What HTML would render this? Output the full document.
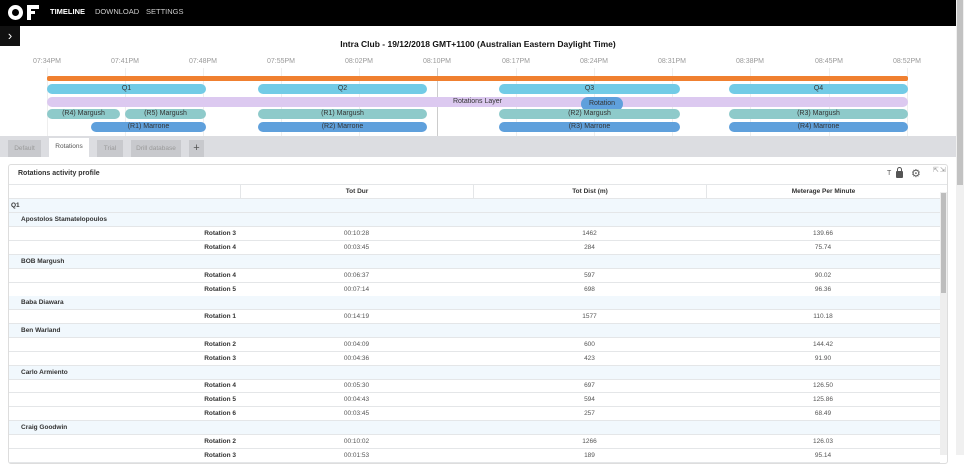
<!DOCTYPE html>
<html><head><style>
*{box-sizing:border-box;margin:0;padding:0}
body{width:964px;height:455px;overflow:hidden;background:#fff;font-family:"Liberation Sans",sans-serif;position:relative}
.a{position:absolute}
.bar{position:absolute;border-radius:6px;font-size:7px;color:#333;text-align:center;line-height:10px;height:10px}
.tick{position:absolute;top:58px;font-size:7px;color:#999;width:40px;margin-left:-20px;text-align:center}
.vl{position:absolute;top:68px;height:68px;width:1px;background:#eee}
.tab{position:absolute;top:140px;height:17px;font-size:6.5px;color:#999;background:#c8c9cd;line-height:17px;text-align:center}
.row{position:absolute;left:9px;width:931px;height:14px;border-bottom:1px solid #e4e6e8;font-size:6.5px;line-height:13px;color:#555}
.row.g{background:#f1f8fd;font-weight:bold;color:#333}
.row span{position:absolute;text-align:center}
.c1{left:0;width:231px;text-align:right!important;padding-right:4px;font-weight:bold;color:#333}
.c2{left:231px;width:233px}.c3{left:464px;width:233px}.c4{left:697px;width:234px}
</style></head><body>
<div class="a" style="left:0;top:0;width:956px;height:26px;background:#000"></div>
<div class="a" style="left:8px;top:5px;width:15px;height:15px;border:4px solid #fff;border-radius:50%"></div>
<div class="a" style="left:27px;top:5px;width:12px;height:4px;background:#fff"></div>
<div class="a" style="left:27px;top:5px;width:4px;height:15px;background:#fff"></div>
<div class="a" style="left:27px;top:11px;width:8px;height:3px;background:#fff"></div>
<div class="a" style="left:50px;top:7px;font-size:7.5px;color:#fff;font-weight:bold">TIMELINE</div>
<div class="a" style="left:95px;top:7px;font-size:7.5px;color:#ccc">DOWNLOAD</div>
<div class="a" style="left:146px;top:7px;font-size:7.5px;color:#ccc">SETTINGS</div>
<div class="a" style="left:0;top:26px;width:20px;height:20px;background:#111;color:#fff;font-size:13px;line-height:19px;text-align:center">&#8250;</div>
<div class="a" style="left:956px;top:0;width:8px;height:455px;background:#f0f0f0"></div>
<div class="a" style="left:957px;top:0;width:6px;height:185px;background:#c2c2c2"></div>
<div class="a" style="left:0;top:39px;width:956px;text-align:center;font-size:8.5px;font-weight:bold;color:#111">Intra Club - 19/12/2018 GMT+1100 (Australian Eastern Daylight Time)</div>
<div class="tick" style="left:47px">07:34PM</div><div class="tick" style="left:125px">07:41PM</div><div class="tick" style="left:203px">07:48PM</div><div class="tick" style="left:281px">07:55PM</div><div class="tick" style="left:359px">08:02PM</div><div class="tick" style="left:437px">08:10PM</div><div class="tick" style="left:516px">08:17PM</div><div class="tick" style="left:594px">08:24PM</div><div class="tick" style="left:672px">08:31PM</div><div class="tick" style="left:750px">08:38PM</div><div class="tick" style="left:829px">08:45PM</div><div class="tick" style="left:907px">08:52PM</div>
<div class="vl" style="left:47px"></div><div class="vl" style="left:125px"></div><div class="vl" style="left:203px"></div><div class="vl" style="left:281px"></div><div class="vl" style="left:359px"></div><div class="vl" style="left:437px;background:#ccc"></div><div class="vl" style="left:516px"></div><div class="vl" style="left:594px"></div><div class="vl" style="left:672px"></div><div class="vl" style="left:750px"></div><div class="vl" style="left:829px"></div><div class="vl" style="left:907px"></div>
<div class="a" style="left:47px;top:76px;width:861px;height:5px;background:#f08030;border-radius:2px"></div>
<div class="bar" style="left:47px;top:84px;width:159px;background:#72cbe6">Q1</div>
<div class="bar" style="left:258px;top:84px;width:169px;background:#72cbe6">Q2</div>
<div class="bar" style="left:499px;top:84px;width:181px;background:#72cbe6">Q3</div>
<div class="bar" style="left:729px;top:84px;width:179px;background:#72cbe6">Q4</div>
<div class="bar" style="left:47px;top:97px;width:861px;background:#dcc9f0">Rotations Layer</div>
<div class="bar" style="left:581px;top:97px;width:42px;height:14px;line-height:14px;background:#5fa0dc;border-radius:7px">Rotation</div>
<div class="bar" style="left:47px;top:109px;width:73px;background:#8ecaca">(R4) Margush</div>
<div class="bar" style="left:125px;top:109px;width:81px;background:#8ecaca">(R5) Margush</div>
<div class="bar" style="left:258px;top:109px;width:169px;background:#8ecaca">(R1) Margush</div>
<div class="bar" style="left:499px;top:109px;width:181px;background:#8ecaca">(R2) Margush</div>
<div class="bar" style="left:729px;top:109px;width:179px;background:#8ecaca">(R3) Margush</div>
<div class="bar" style="left:91px;top:122px;width:115px;background:#5fa0dc">(R1) Marrone</div>
<div class="bar" style="left:258px;top:122px;width:169px;background:#5fa0dc">(R2) Marrone</div>
<div class="bar" style="left:499px;top:122px;width:181px;background:#5fa0dc">(R3) Marrone</div>
<div class="bar" style="left:729px;top:122px;width:179px;background:#5fa0dc">(R4) Marrone</div>
<div class="a" style="left:0;top:136px;width:956px;height:21px;background:#dcdde1"></div>
<div class="tab" style="left:8px;width:33px">Default</div>
<div class="tab" style="left:49px;width:40px;top:138px;height:19px;background:#fff;color:#555">Rotations</div>
<div class="tab" style="left:97px;width:26px">Trial</div>
<div class="tab" style="left:131px;width:50px">Drill database</div>
<div class="tab" style="left:189px;width:15px;font-size:11px;color:#555">+</div>
<div class="a" style="left:8px;top:164px;width:940px;height:300px;border:1px solid #ddd;border-radius:3px;background:#fff"></div>
<div class="a" style="left:18px;top:170px;font-size:7px;font-weight:bold;color:#333">Rotations activity profile</div>
<div class="a" style="left:887px;top:170px;font-size:7px;color:#555">T</div>
<div class="a" style="left:896px;top:171px;width:7px;height:7px;background:#555;border-radius:1px"></div>
<div class="a" style="left:897px;top:167px;width:5px;height:6px;border:1.5px solid #555;border-radius:3px 3px 0 0"></div>
<div class="a" style="left:911px;top:167px;font-size:11px;color:#555">&#9881;</div>
<div class="a" style="left:933px;top:168px;font-size:7px;color:#999;letter-spacing:1px;line-height:6px">&#8689;&#8690;</div>
<div class="a" style="left:9px;top:184px;width:938px;height:1px;background:#e4e6e8"></div>
<div class="row" style="top:185px;height:14px;font-weight:bold;color:#333"><span class="c2" style="border-left:1px solid #e4e6e8">Tot Dur</span><span class="c3" style="border-left:1px solid #e4e6e8">Tot Dist (m)</span><span class="c4" style="border-left:1px solid #e4e6e8">Meterage Per Minute</span></div>
<div class="a" style="left:940px;top:192px;width:7px;height:263px;background:#eee"></div>
<div class="a" style="left:941px;top:193px;width:5px;height:100px;background:#bdbdbd"></div>
<div class="row g" style="top:199px;padding-left:2px">Q1</div>
<div class="row g" style="top:213px;padding-left:12px">Apostolos Stamatelopoulos</div>
<div class="row" style="top:227px"><span class="c1">Rotation 3</span><span class="c2">00:10:28</span><span class="c3">1462</span><span class="c4">139.66</span></div>
<div class="row" style="top:241px"><span class="c1">Rotation 4</span><span class="c2">00:03:45</span><span class="c3">284</span><span class="c4">75.74</span></div>
<div class="row g" style="top:255px;padding-left:12px">BOB Margush</div>
<div class="row" style="top:269px"><span class="c1">Rotation 4</span><span class="c2">00:06:37</span><span class="c3">597</span><span class="c4">90.02</span></div>
<div class="row" style="top:283px"><span class="c1">Rotation 5</span><span class="c2">00:07:14</span><span class="c3">698</span><span class="c4">96.36</span></div>
<div class="row g" style="top:296px;padding-left:12px">Baba Diawara</div>
<div class="row" style="top:310px"><span class="c1">Rotation 1</span><span class="c2">00:14:19</span><span class="c3">1577</span><span class="c4">110.18</span></div>
<div class="row g" style="top:324px;padding-left:12px">Ben Warland</div>
<div class="row" style="top:338px"><span class="c1">Rotation 2</span><span class="c2">00:04:09</span><span class="c3">600</span><span class="c4">144.42</span></div>
<div class="row" style="top:352px"><span class="c1">Rotation 3</span><span class="c2">00:04:36</span><span class="c3">423</span><span class="c4">91.90</span></div>
<div class="row g" style="top:366px;padding-left:12px">Carlo Armiento</div>
<div class="row" style="top:379px"><span class="c1">Rotation 4</span><span class="c2">00:05:30</span><span class="c3">697</span><span class="c4">126.50</span></div>
<div class="row" style="top:393px"><span class="c1">Rotation 5</span><span class="c2">00:04:43</span><span class="c3">594</span><span class="c4">125.86</span></div>
<div class="row" style="top:407px"><span class="c1">Rotation 6</span><span class="c2">00:03:45</span><span class="c3">257</span><span class="c4">68.49</span></div>
<div class="row g" style="top:421px;padding-left:12px">Craig Goodwin</div>
<div class="row" style="top:435px"><span class="c1">Rotation 2</span><span class="c2">00:10:02</span><span class="c3">1266</span><span class="c4">126.03</span></div>
<div class="row" style="top:449px"><span class="c1">Rotation 3</span><span class="c2">00:01:53</span><span class="c3">189</span><span class="c4">95.14</span></div>
</body></html>
